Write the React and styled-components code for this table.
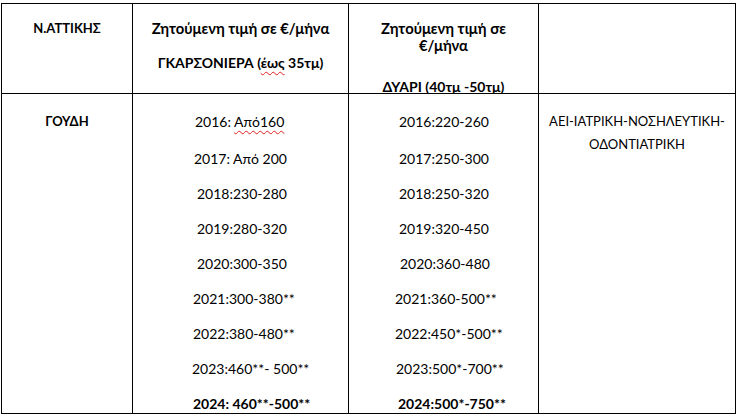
import styled, { createGlobalStyle } from "styled-components";

const GlobalStyle = createGlobalStyle`
    body {
        margin: 0;
        background: #ffffff;
        font-family: Lato, "Open Sans", sans-serif;
        color: #000000;
    }
`

function PriceList({ rows }) {
    return (
        <BodyCell>
            {rows.map((row, i) => (
                <PriceLine key={i} $indent={row.indent} $bold={row.bold} $first={i === 0}>
                    {row.text}
                </PriceLine>
            ))}
        </BodyCell>
    )
}

export default function App() {
    return (
        <>
            <GlobalStyle />
            <Table>
                <HeadCell>
                    <HeadLine $size={13}>Ν.ΑΤΤΙΚΗΣ</HeadLine>
                </HeadCell>
                <HeadCell>
                    <HeadLine $size={14.8}>Ζητούμενη τιμή σε €/μήνα</HeadLine>
                    <HeadLine $gap={17} $size={14}>ΓΚΑΡΣΟΝΙΕΡΑ (<Squiggle>έως</Squiggle> 35τμ)</HeadLine>
                </HeadCell>
                <HeadCell>
                    <HeadLine $size={14.8}>Ζητούμενη τιμή σε</HeadLine>
                    <HeadLine $size={14.8}>€/μήνα</HeadLine>
                    <HeadLine $gap={24} $size={14}>ΔΥΑΡΙ (40τμ -50τμ)</HeadLine>
                </HeadCell>
                <HeadCell />

                <BodyCell>
                    <AreaName>ΓΟΥΔΗ</AreaName>
                </BodyCell>
                <PriceList rows={col2} />
                <PriceList rows={col3} />
                <BodyCell>
                    <Schools>
                        ΑΕΙ-ΙΑΤΡΙΚΗ-ΝΟΣΗΛΕΥΤΙΚΗ-<br />ΟΔΟΝΤΙΑΤΡΙΚΗ
                    </Schools>
                </BodyCell>
            </Table>
        </>
    )
}

const Table = styled.div`
    display: grid;
    grid-template-columns: 131px 216px 190px 197px;
    grid-template-rows: 90px 320px;
    width: max-content;
    margin: 3px 0 0 1px;
    border-left: 1px solid #000;
    border-top: 1px solid #000;
    font-size: 13px;
`

const Cell = styled.div`
    box-sizing: border-box;
    border-right: 1px solid #000;
    border-bottom: 1px solid #000;
    min-width: 0;
`

const HeadCell = styled(Cell)`
    padding-top: 16px;
    text-align: center;
    font-weight: 700;
    line-height: 17px;
`

const HeadLine = styled.div`
    margin-top: ${p => p.$gap || 0}px;
    font-size: ${p => p.$size}px;
    white-space: nowrap;
`

const BodyCell = styled(Cell)`
    padding-top: 10px;
    display: flex;
    flex-direction: column;
`

const PriceLine = styled.div`
    line-height: 35px;
    font-size: 14px;
    padding-left: ${p => p.$indent}px;
    font-weight: ${p => p.$bold ? 700 : 400};
    margin-bottom: ${p => p.$first ? 2 : 0}px;
    white-space: pre;
`

const AreaName = styled.div`
    line-height: 35px;
    text-align: center;
    font-weight: 700;
`

const Schools = styled.div`
    margin-top: 6px;
    line-height: 23px;
    text-align: center;
    white-space: nowrap;
`

const Squiggle = styled.span`
    text-decoration: underline wavy #e02020;
    text-decoration-thickness: 1px;
    text-underline-offset: 3px;
    text-decoration-skip-ink: none;
`

const col2 = [
    { text: <>2016: <Squiggle>Από160</Squiggle></>, indent: 62 },
    { text: "2017: Από 200", indent: 61 },
    { text: "2018:230-280", indent: 64 },
    { text: "2019:280-320", indent: 64 },
    { text: "2020:300-350", indent: 64 },
    { text: "2021:300-380**", indent: 60 },
    { text: "2022:380-480**", indent: 60 },
    { text: "2023:460**- 500**", indent: 59 },
    { text: "2024: 460**-500**", indent: 60, bold: true },
]

const col3 = [
    { text: "2016:220-260", indent: 50 },
    { text: "2017:250-300", indent: 50 },
    { text: "2018:250-320", indent: 50 },
    { text: "2019:320-450", indent: 50 },
    { text: "2020:360-480", indent: 51 },
    { text: "2021:360-500**", indent: 46 },
    { text: "2022:450*-500**", indent: 46 },
    { text: "2023:500*-700**", indent: 47 },
    { text: "2024:500*-750**", indent: 49, bold: true },
]
